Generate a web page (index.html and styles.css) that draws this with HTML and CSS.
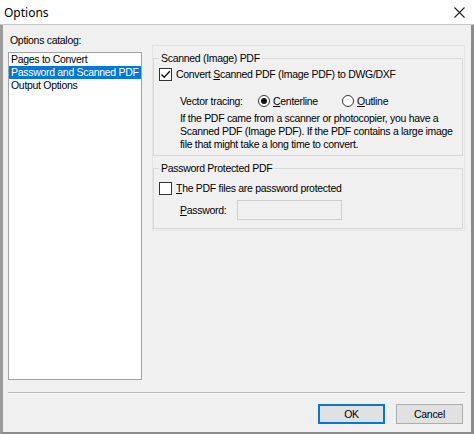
FILE: index.html
```html
<!DOCTYPE html>
<html>
<head>
<meta charset="utf-8">
<link rel="stylesheet" href="styles.css">
</head>
<body>
<div class="window">
  <div class="titlebar">
    <span class="title">Options</span>
    <svg class="close" width="11" height="11" viewBox="0 0 11 11"><path d="M0.5 0.5 L10.5 10.5 M10.5 0.5 L0.5 10.5" stroke="#222" stroke-width="1.1" fill="none"/></svg>
  </div>
  <div class="client">
    <div class="main">
      <div class="catalog">
        <div class="catalog-label">Options catalog:</div>
        <div class="listbox">
          <div class="item">Pages to Convert</div>
          <div class="item selected">Password and Scanned PDF</div>
          <div class="item">Output Options</div>
        </div>
      </div>
      <div class="panel">
        <fieldset class="group">
          <legend>Scanned (Image) PDF</legend>
          <div class="check-row first">
            <span class="checkbox"><svg width="11" height="11" viewBox="0 0 11 11"><path d="M1.5 5.5 L4.2 8.3 L9.8 2.2" stroke="#111" stroke-width="1.3" fill="none"/></svg></span>
            <span>Convert <u>S</u>canned PDF (Image PDF) to DWG/DXF</span>
          </div>
          <div class="radio-row">
            <span class="radio-label">Vector tracing:</span>
            <span class="radio-item"><span class="radio on"></span><span><u>C</u>enterline</span></span>
            <span class="radio-item"><span class="radio"></span><span><u>O</u>utline</span></span>
          </div>
          <p class="note">If the PDF came from a scanner or photocopier, you have a<br>Scanned PDF (Image PDF). If the PDF contains a large image<br>file that might take a long time to convert.</p>
        </fieldset>
        <fieldset class="group second">
          <legend>Password Protected PDF</legend>
          <div class="check-row second-row">
            <span class="checkbox"></span>
            <span><u>T</u>he PDF files are password protected</span>
          </div>
          <div class="pw-row">
            <span class="pw-label"><u>P</u>assword:</span>
            <span class="pw-input"></span>
          </div>
        </fieldset>
      </div>
    </div>
    <div class="sep"></div>
    <div class="buttons">
      <div class="btn default">OK</div>
      <div class="btn">Cancel</div>
    </div>
  </div>
</div>
</body>
</html>
```

FILE: styles.css
```css
* { box-sizing: border-box; }
html, body { margin: 0; padding: 0; }
body {
  width: 474px;
  height: 434px;
  overflow: hidden;
  background: #f0f0f0;
  font-family: "Liberation Sans", Arial, sans-serif;
  font-size: 10.5px;
  letter-spacing: -0.3px;
  color: #000;
}
.window {
  width: 474px;
  height: 434px;
  display: flex;
  flex-direction: column;
}
.titlebar {
  height: 25px;
  flex: none;
  background: #fff;
  border-bottom: 1px solid #c6c6c6;
  display: flex;
  align-items: center;
  justify-content: space-between;
  padding: 0 9px 0 4px;
  letter-spacing: 0;
}
.title {
  font-family: "Noto Sans", sans-serif;
  font-size: 12px;
  color: #000;
}
.client {
  flex: 1;
  border-left: 3px solid #9c9c9c;
  border-right: 3px solid #8c8c8c;
  border-bottom: 2px solid #8c8c8c;
  padding: 9px 6px 0 5px;
  display: flex;
  flex-direction: column;
}
.main {
  display: flex;
  align-items: flex-start;
  gap: 10px;
}
.catalog { width: 134px; flex: none; }
.catalog-label {
  line-height: 13px;
  padding-left: 2px;
  margin-bottom: 5px;
}
.listbox {
  height: 328px;
  background: #fff;
  border: 1px solid #a3a3a3;
}
.item {
  height: 13px;
  line-height: 13px;
  padding-left: 2px;
  white-space: nowrap;
}
.item.selected { background: #0078d7; color: #fff; }
.panel {
  flex: 1;
  margin-top: 11px;
  border: 1px solid #e4e4e4;
  padding: 6px 1px 1px 0;
}
.group {
  margin: 0;
  min-width: 0;
  border: 1px solid #d9d9d9;
  padding: 0 6px 4px 5px;
}
.group legend {
  padding: 0 2px;
  margin: 0;
  line-height: 13px;
}
.group.second { margin-top: 6px; padding-bottom: 8px; }
.check-row {
  display: flex;
  align-items: center;
  gap: 4px;
  height: 13px;
  line-height: 13px;
  white-space: nowrap;
}
.check-row.first { margin-top: 3px; }
.check-row.second-row { margin-top: 7px; }
.checkbox {
  width: 13px;
  height: 13px;
  border: 1px solid #333;
  background: #fff;
  display: flex;
  align-items: center;
  justify-content: center;
  flex: none;
}
.radio-row {
  display: flex;
  align-items: center;
  height: 13px;
  margin: 13px 0 0 21px;
  white-space: nowrap;
}
.radio-label { width: 78px; }
.radio-item {
  width: 84px;
  display: flex;
  align-items: center;
  gap: 3px;
}
.radio {
  width: 12px;
  height: 12px;
  border: 1px solid #333;
  border-radius: 50%;
  background: #fff;
  display: flex;
  align-items: center;
  justify-content: center;
  flex: none;
}
.radio.on::after {
  content: "";
  width: 6px;
  height: 6px;
  border-radius: 50%;
  background: #111;
}
.note {
  margin: 5px 0 0 21px;
  line-height: 13px;
  white-space: nowrap;
}
.pw-row {
  display: flex;
  align-items: center;
  margin: 5px 0 0 21px;
}
.pw-label { width: 57px; }
.pw-input {
  width: 105px;
  height: 20px;
  background: #f0f0f0;
  border: 1px solid #cfcfcf;
}
.sep {
  margin-top: 12px;
  height: 2px;
  border-top: 1px solid #b9b9b9;
  border-bottom: 1px solid #fbfbfb;
}
.buttons {
  display: flex;
  justify-content: flex-end;
  gap: 11px;
  padding: 10px 2px 0 0;
}
.btn {
  width: 67px;
  height: 20px;
  background: #e1e1e1;
  border: 1px solid #adadad;
  display: flex;
  align-items: center;
  justify-content: center;
}
.btn.default {
  border: 1px solid #0078d7;
  box-shadow: inset 0 0 0 1px #0078d7;
}
```
